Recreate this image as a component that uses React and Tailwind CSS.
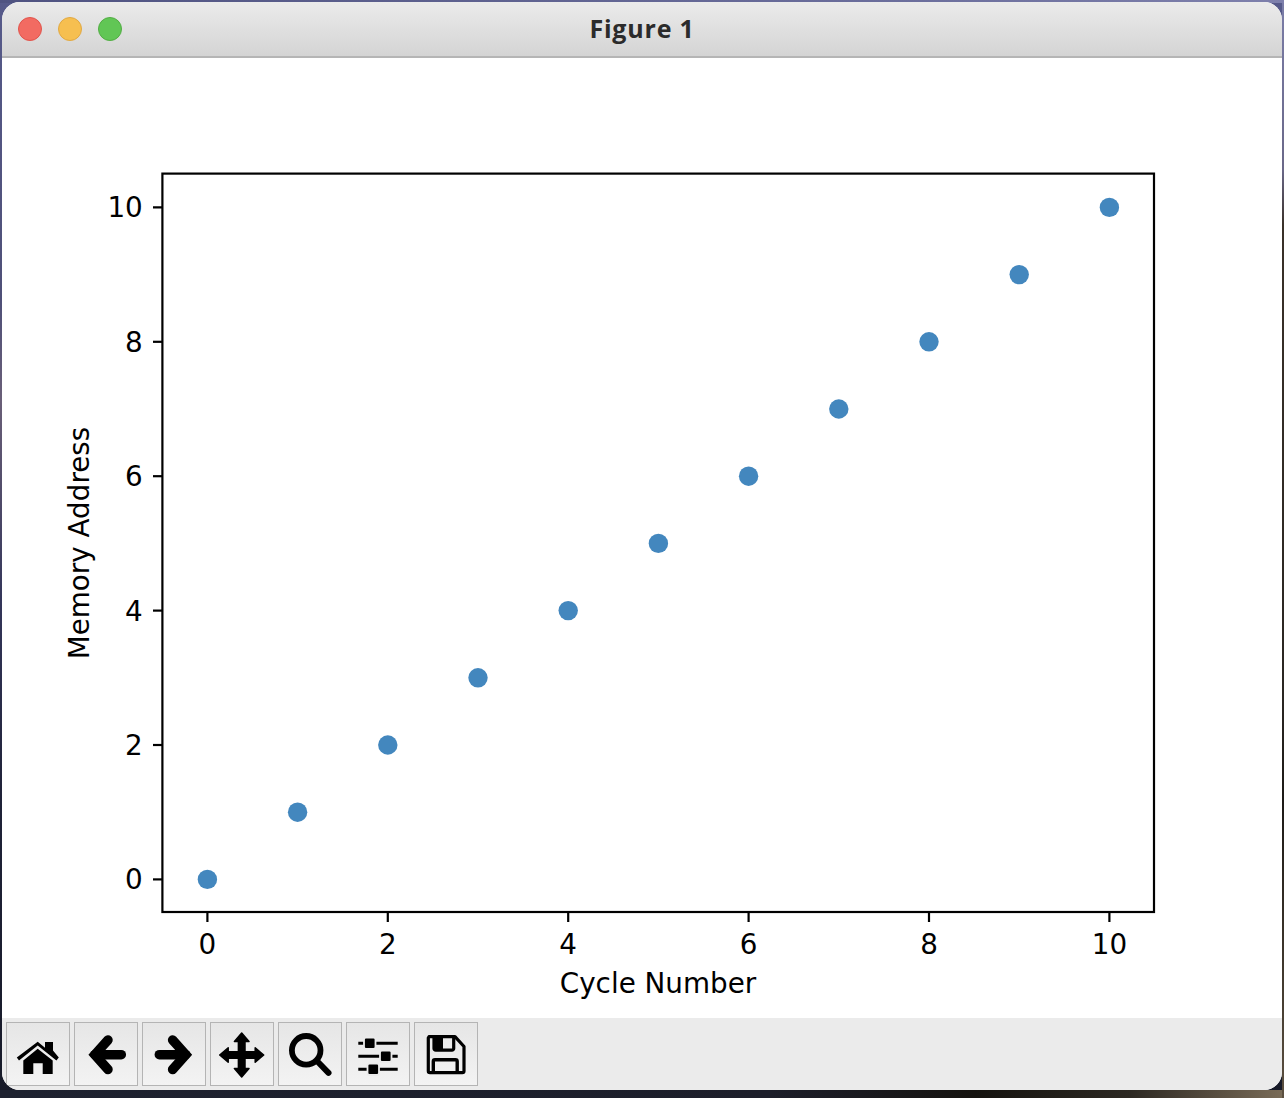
const font = { fontFamily: '"DejaVu Sans", sans-serif' };

const xs = [0,1,2,3,4,5,6,7,8,9,10];
const px = (v) => 207.4 + v * 90.2;
const py = (v) => 879.4 - v * 67.2 - 57;

function Chart() {
  return (
    <svg width="1280" height="960" viewBox="0 1 1280 960" className="block" style={font}>
      <g transform="translate(-2 0)">
        <rect x="162.4" y="116.6" width="991.6" height="738.4" fill="none" stroke="#000" strokeWidth="2.2" />
        {xs.filter((v) => v % 2 === 0).map((v) => (
          <g key={v}>
            <line x1={px(v)} x2={px(v)} y1="855" y2="865" stroke="#000" strokeWidth="2.2" />
            <text x={px(v)} y="897" textAnchor="middle" fontSize="27.8" fill="#000">{v}</text>
            <line x1="153" x2="162.4" y1={py(v)} y2={py(v)} stroke="#000" strokeWidth="2.2" />
            <text x="142.8" y={py(v) + 10} textAnchor="end" fontSize="27.8" fill="#000">{v}</text>
          </g>
        ))}
        {xs.map((v) => (
          <circle key={v} cx={px(v)} cy={py(v)} r="9.7" fill="#4387be" />
        ))}
        <text x="658" y="936" textAnchor="middle" fontSize="27.8" fill="#000">Cycle Number</text>
        <text transform="translate(89 486) rotate(-90)" textAnchor="middle" fontSize="27.8" fill="#000">Memory Address</text>
      </g>
    </svg>
  );
}

const arrow = (
  <g fill="none" stroke="#000" strokeWidth="9.5" strokeLinecap="round" strokeLinejoin="miter">
    <path d="M26 10 12.800 24.700 26 39.500" />
    <path d="M13 24.700H39.300" />
  </g>
);

const icons = [
  <g key="h">
    <path d="M31 12h8v8.600l5.800 7-2.400 2.800L23.700 15.600 5 30.400l-2.200-2.800L23.700 11.800 31 17.800z" />
    <path d="M23.700 18.800 38.700 30.500V44H28.700V33.300H19.300V44H9.300V30.500z" />
  </g>,
  <g key="b">{arrow}</g>,
  <g key="f" transform="matrix(-1 0 0 1 48.600 0)">{arrow}</g>,
  <path key="m" transform="translate(-.3 1)" stroke="#000" strokeWidth="1.500" strokeLinejoin="round" d="M24 2 31.300 10.500H27.300V20.700H37.500V16.700L46 24 37.500 31.300V27.300H27.300V37.500H31.300L24 46 16.700 37.500H20.700V27.300H10.500V31.300L2 24 10.500 16.700V20.700H20.700V10.500H16.700z" />,
  <g key="z" fill="none" stroke="#000" strokeLinecap="round">
    <circle cx="20.200" cy="20.300" r="14.300" strokeWidth="5.800" />
    <path d="M31 31 42.500 42.800" strokeWidth="6" />
  </g>,
  <g key="s">
    <path d="M4.300 13.300H43.700M4.300 26.300H43.700M4.300 39.300H43.700" stroke="#000" strokeWidth="3" />
    <rect x="10" y="7.500" width="11.500" height="11.500" rx="2" fill="#000" stroke="#ebebeb" strokeWidth="1.800" />
    <rect x="26" y="20.500" width="11.500" height="11.500" rx="2" fill="#000" stroke="#ebebeb" strokeWidth="1.800" />
    <rect x="13.500" y="33.500" width="11.500" height="11.500" rx="2" fill="#000" stroke="#ebebeb" strokeWidth="1.800" />
  </g>,
  <g key="d" fill="none" stroke="#000" strokeWidth="3.200" strokeLinejoin="round">
    <path d="M7 6.600H33L42 16.500V41a1.700 1.700 0 0 1-1.700 1.700H8a1.700 1.700 0 0 1-1.700-1.700V8z" />
    <path d="M12 6.600V18.500a1.700 1.700 0 0 0 1.700 1.700H30a1.700 1.700 0 0 0 1.700-1.700V6.600" />
    <rect x="12" y="6.600" width="9" height="13.600" fill="#000" stroke="none" />
    <path d="M11.300 42.700V31.500a1.700 1.700 0 0 1 1.700-1.700H33.500a1.700 1.700 0 0 1 1.700 1.700V42.700" strokeWidth="3.400" />
  </g>,
];

function Tool({ children }) {
  return (
    <button className="flex h-16 w-16 items-center justify-center border border-[#b4b4b4] bg-gradient-to-b from-[#e6e6e6] to-[#f3f3f3]">
      <svg width="48" height="48" viewBox="0 0 48 48" fill="#000">{children}</svg>
    </button>
  );
}

export default function App() {
  return (
    <div className="h-[1098px] w-[1284px] overflow-hidden bg-no-repeat p-0.5 pb-2 [background-image:linear-gradient(to_right,#4f5381_0%,#6b6e9c_70%,#7e80ac_100%),linear-gradient(to_bottom,#7b7da8_0,#6a6888_170px,#3a3129_225px,#2a2622_700px,#1d1a17_800px,#5c5040_1098px),linear-gradient(to_right,#1e2230_0%,#1c1e2a_60%,#15130f_76%,#2c2822_88%,#7a6c58_100%),linear-gradient(to_bottom,#565a8a_0,#4f5078_300px,#6a5f78_400px,#34365a_600px,#1f2238_800px,#171a28_1098px)] [background-size:100%_3px,2px_100%,100%_8px,100%_100%] [background-position:0_0,100%_0,0_100%,0_0]">
      <div className="flex h-full flex-col overflow-hidden rounded-[18px] bg-white">
        <div className="relative flex h-14 shrink-0 items-center border-b-2 border-[#b5b5b5] bg-gradient-to-b from-[#ebebeb] to-[#d4d4d4] px-4">
          <div className="flex gap-4">
            <span className="h-6 w-6 rounded-full border border-[#e0544c] bg-[#f26b62]" />
            <span className="h-6 w-6 rounded-full border border-[#e0a843] bg-[#f6bf50]" />
            <span className="h-6 w-6 rounded-full border border-[#52ad44] bg-[#61c655]" />
          </div>
          <div className="absolute inset-x-0 top-2 text-center text-[25px] font-bold leading-[36px] tracking-[0.8px] text-[#2b2b2b]" style={{ fontFamily: '"Open Sans", sans-serif' }}>Figure 1</div>
        </div>
        <Chart />
        <div className="flex flex-1 items-center gap-1 bg-[#ebebeb] px-1">
          {icons.map((ic, i) => <Tool key={i}>{ic}</Tool>)}
        </div>
      </div>
    </div>
  );
}
